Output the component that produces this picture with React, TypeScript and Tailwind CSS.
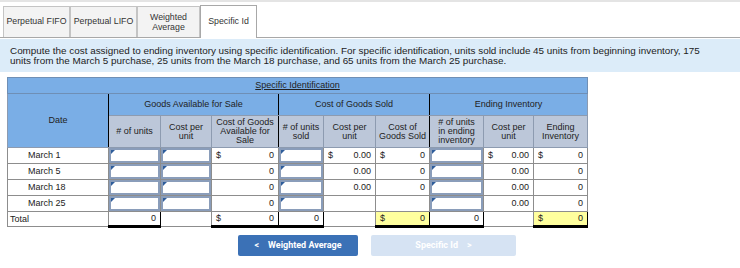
import React from 'react';

const cols = [101, 52, 51, 67, 45, 52, 54, 54, 50, 54];

function InputCell() {
  return (
    <td className="p-0 border border-[#8d8d8d]">
      <div className="relative h-[15px] border-2 border-[#8a9dba] bg-white">
        <span className="absolute left-0 top-0 h-0 w-0 border-t-[4px] border-r-[4px] border-t-[#2e5d9b] border-r-transparent" />
      </div>
    </td>
  );
}

function Val({ dollar, v, yellow, total }: { dollar?: boolean; v?: string; yellow?: boolean; total?: boolean }) {
  return (
    <td
      className={`h-[15px] px-1 py-0 border border-[#8d8d8d] ${yellow ? 'bg-[#ffff9e]' : 'bg-white'} ${
        total ? 'border-x-black border-b-[3px] border-b-black' : ''
      }`}
    >
      <div className="flex justify-between leading-none">
        <span>{dollar ? '$' : ''}</span>
        <span>{v ?? ''}</span>
      </div>
    </td>
  );
}

export default function App() {
  const rows = [
    { d: 'March 1', first: true, cpu: true },
    { d: 'March 5', cpu: true },
    { d: 'March 18', cpu: true },
    { d: 'March 25', cpu: false },
  ];
  return (
    <div className="w-[740px] h-[268px] bg-white overflow-hidden" style={{ fontFamily: '"Liberation Sans", Arial, sans-serif' }}>
      <div className="h-[2px] bg-[#e4e4e4]" />
      <div className="flex items-end pl-[3px] pt-[4px] border-b border-[#a8a8a8] h-[36px]">
        {['Perpetual FIFO', 'Perpetual LIFO'].map((t) => (
          <div key={t} className="w-[67px] h-[31px] flex items-center justify-center bg-[#f3f3f3] border border-b-0 border-[#c4c4c4] text-[8.8px] text-[#333]">
            {t}
          </div>
        ))}
        <div className="w-[63px] h-[31px] flex items-center justify-center text-center bg-[#f3f3f3] border border-b-0 border-[#c4c4c4] text-[8.8px] leading-[10px] text-[#333]">
          Weighted
          <br />
          Average
        </div>
        <div className="w-[57px] h-[33px] -mb-px flex items-center justify-center bg-white border border-b-0 border-[#a8a8a8] text-[8.8px] text-[#333]">
          Specific Id
        </div>
      </div>
      <div className="mt-[1px] bg-[#dcecf9] h-[33px] pl-[10px] pr-[34px] pt-[7px] text-[9.9px] leading-[10px] text-[#222]">
        Compute the cost assigned to ending inventory using specific identification. For specific identification, units sold include 45 units from beginning inventory, 175 units from the March 5 purchase, 25 units from the March 18 purchase, and 65 units from the March 25 purchase.
      </div>
      <div className="pl-[7px] pt-[5px]">
        <table className="table-fixed border-collapse text-[9px] text-[#222]" style={{ width: 580 }}>
          <colgroup>
            {cols.map((w, i) => (
              <col key={i} style={{ width: w }} />
            ))}
          </colgroup>
          <thead>
            <tr className="h-[16px] bg-[#7aaee6]">
              <th colSpan={10} className="p-0 border border-[#6f8fb5] font-normal text-center">
                <span className="underline">Specific Identification</span>
              </th>
            </tr>
            <tr className="h-[22px] bg-[#7aaee6]">
              <th rowSpan={2} className="p-0 border border-[#8d9bb0] border-r-black font-normal">Date</th>
              <th colSpan={3} className="p-0 border border-[#8d9bb0] border-r-black font-normal">Goods Available for Sale</th>
              <th colSpan={3} className="p-0 border border-[#8d9bb0] border-r-black font-normal">Cost of Goods Sold</th>
              <th colSpan={3} className="p-0 border border-[#8d9bb0] font-normal">Ending Inventory</th>
            </tr>
            <tr className="h-[32px] bg-[#bcc7d9] leading-[9px]">
              <th className="p-0 border border-[#8d9bb0] font-normal">
                # of units
              </th>
              <th className="p-0 border border-[#8d9bb0] font-normal">
                Cost per
                <br />
                unit
              </th>
              <th className="p-0 border border-[#8d9bb0] border-r-black font-normal">
                Cost of Goods
                <br />
                Available for
                <br />
                Sale
              </th>
              <th className="p-0 border border-[#8d9bb0] font-normal">
                # of units
                <br />
                sold
              </th>
              <th className="p-0 border border-[#8d9bb0] font-normal">
                Cost per
                <br />
                unit
              </th>
              <th className="p-0 border border-[#8d9bb0] border-r-black font-normal">
                Cost of
                <br />
                Goods Sold
              </th>
              <th className="p-0 border border-[#8d9bb0] font-normal">
                # of units
                <br />
                in ending
                <br />
                inventory
              </th>
              <th className="p-0 border border-[#8d9bb0] font-normal">
                Cost per
                <br />
                unit
              </th>
              <th className="p-0 border border-[#8d9bb0] font-normal">
                Ending
                <br />
                Inventory
              </th>
            </tr>
          </thead>
          <tbody>
            {rows.map((r) => (
              <tr key={r.d} className="h-[16px]">
                <td className="p-0 border border-[#8d8d8d] pl-[20px] leading-none">{r.d}</td>
                <InputCell />
                <InputCell />
                <Val dollar={r.first} v="0" />
                <InputCell />
                {r.cpu ? <Val dollar={r.first} v="0.00" /> : <Val />}
                {r.cpu ? <Val dollar={r.first} v="0" /> : <Val />}
                <InputCell />
                <Val dollar={r.first} v="0.00" />
                <Val dollar={r.first} v="0" />
              </tr>
            ))}
            <tr className="h-[14px]">
              <td className="p-0 border border-[#8d8d8d] pl-[2px] leading-none">Total</td>
              <Val v="0" total />
              <Val />
              <Val dollar v="0" total />
              <Val v="0" total />
              <Val />
              <Val dollar v="0" total yellow />
              <Val v="0" total />
              <Val />
              <Val dollar v="0" total yellow />
            </tr>
          </tbody>
        </table>
      </div>
      <div className="flex gap-[13px] pl-[238px] pt-[7px]" style={{ fontFamily: 'Roboto, "Liberation Sans", sans-serif' }}>
        <button className="w-[120px] h-[21px] rounded-[2px] bg-[#3b71b6] text-white text-[9px] font-bold flex items-center justify-center gap-[9px]">
          <span>&lt;</span>
          <span>Weighted Average</span>
        </button>
        <button className="w-[145px] h-[21px] rounded-[2px] bg-[#d6e3f3] text-white text-[9px] font-bold flex items-center justify-center gap-[9px]">
          <span>Specific Id</span>
          <span>&gt;</span>
        </button>
      </div>
    </div>
  );
}
